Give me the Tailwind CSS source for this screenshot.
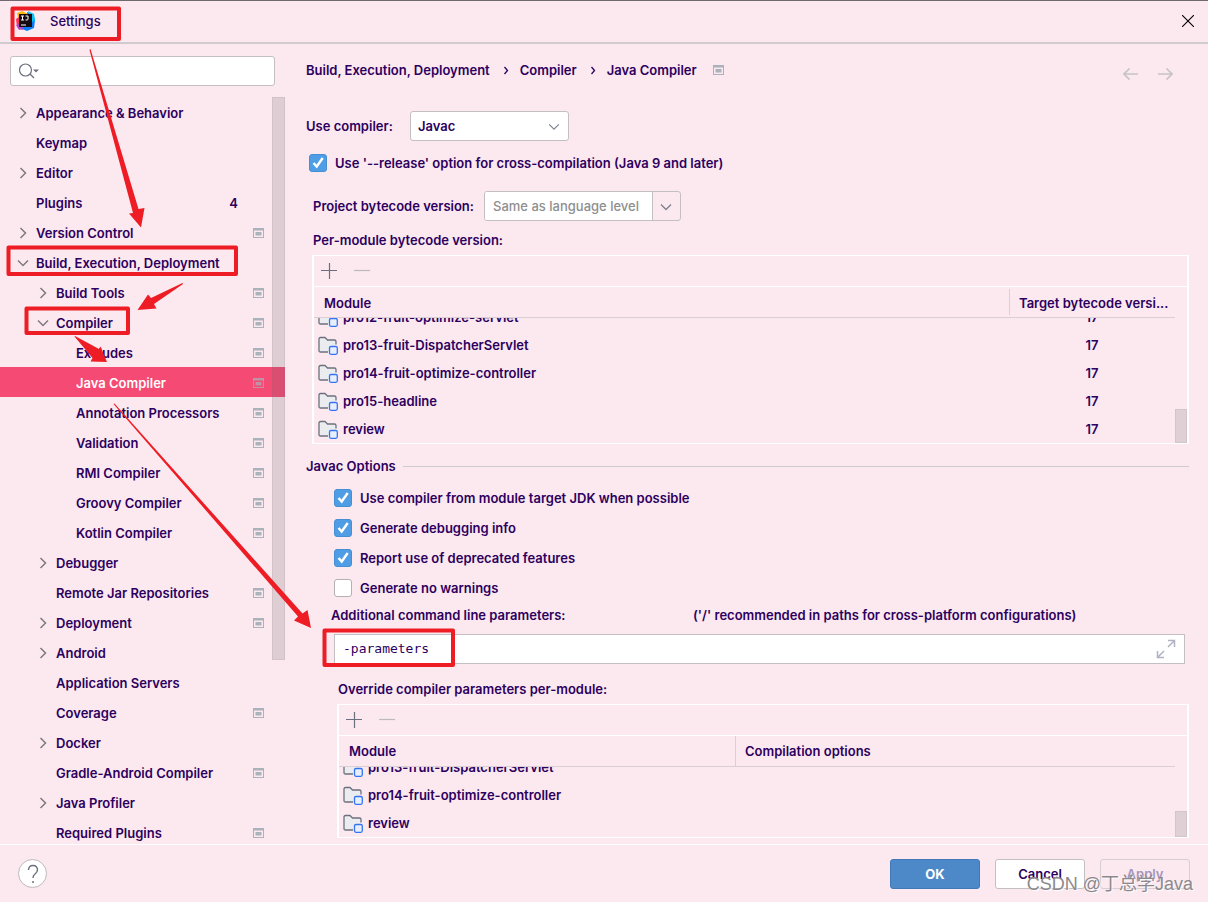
<!DOCTYPE html>
<html lang="en">

<head>
    <meta charset="UTF-8">
    <meta name="viewport" content="width=device-width, initial-scale=1.0">
    <title>Settings</title>
    <script src="https://cdn.jsdelivr.net/npm/@tailwindcss/browser@4"></script>
</head>

<body class="relative flex flex-col h-screen overflow-hidden bg-[#fbe9ef] text-[#2d0060] text-[13px] leading-5 font-semibold font-['Inter','Noto_Sans_CJK_SC',sans-serif]">

    <!-- shared icons -->
    <svg class="hidden">
        <symbol id="right" viewBox="0 0 16 16"><path d="M5.500 3l5 5-5 5" fill="none" stroke="#7f7a80" stroke-width="1.500"/></symbol>
        <symbol id="down" viewBox="0 0 16 16"><path d="M3 5.500l5 5 5-5" fill="none" stroke="#7f7a80" stroke-width="1.500"/></symbol>
        <symbol id="project" viewBox="0 0 11 10"><path d="M0 0h11v10H0zM1 2.500V9h9V2.500z" fill="#aab2bc" fill-rule="evenodd"/><path d="M2.500 4h6v3.500h-6z" fill="#aab2bc"/></symbol>
        <symbol id="module" viewBox="0 0 20 20">
            <path d="M10 17H2.500q-1.500 0-1.500-1.500V4q0-1.500 1.500-1.500h4.500l2.500 2.500h7q1.500 0 1.500 1.500v3" fill="#ebecf0"/>
            <path d="M10 17H2.500q-1.500 0-1.500-1.500V4q0-1.500 1.500-1.500h4.500l2.500 2.500h7q1.500 0 1.500 1.500v3" fill="none" stroke="#6c707e" stroke-width="1.300"/>
            <rect x="11.500" y="11.500" width="7.800" height="7.800" rx="1.500" fill="#e7effd" stroke="#3574f0" stroke-width="1.300"/>
        </symbol>
        <symbol id="check" viewBox="0 0 18 18"><path d="M4.500 9l3.200 3.500 6-8.500" fill="none" stroke="#fff" stroke-width="2.400"/></symbol>
        <symbol id="plus" viewBox="0 0 16 16"><path d="M0 7.500h16M8.500 0v16" stroke="#6c707e" stroke-width="1.200"/></symbol>
        <symbol id="minus" viewBox="0 0 16 16"><path d="M0 7.500h16" stroke="#bdb9be" stroke-width="1.200"/></symbol>
    </svg>

    <header class="flex items-center shrink-0 h-11 pl-4 pr-3 pb-0.5 border-t border-t-[#706a6e] border-b-2 border-b-[#cfcbce]">
        <svg class="size-5" viewBox="0 0 20 20">
            <path d="M1 2l5-2 6 3-6 8-5 1 1-4z" fill="#fdb60d"/>
            <path d="M0 8l6-4 4 12-4 3-5-3z" fill="#fe315d"/>
            <path d="M0 14l6-2 3 5-6 2z" fill="#b845c8"/>
            <path d="M11 1l6 2 2 6-1 8-7 3-5-2 6-8z" fill="#087cfa"/>
            <path d="M12 0l6 3 1 6-3 2z" fill="#07c3f2"/>
            <path d="M3 3h13v13H3z" fill="#140a10"/>
            <path d="M5 5h3M6.500 5v4M5 9h3M9.500 5h2.500v3q0 1-1 1H9.500M5 14h5" fill="none" stroke="#fff"/>
        </svg>
        <h1 class="pl-3.5 font-medium">Settings</h1>
        <button class="ml-auto p-0.5" aria-label="Close">
            <svg class="size-3" viewBox="0 0 12 12"><path d="M0 0l12 12M12 0L0 12" stroke="#000" stroke-width="1.100"/></svg>
        </button>
    </header>

    <div class="flex flex-1 min-h-0">

        <!-- settings tree -->
        <aside class="relative flex flex-col gap-[11px] w-[285px] shrink-0 pt-3 overflow-hidden">
            <div class="flex items-center h-[30px] shrink-0 ml-2.5 mr-2.5 pl-2 bg-white border border-[#c4bfc3] rounded-[3px]">
                <svg class="w-5 h-4 shrink-0" viewBox="0 0 20 16"><circle cx="6.500" cy="7" r="6" fill="none" stroke="#6c707e" stroke-width="1.200"/><path d="M11 11l4 4" stroke="#6c707e" stroke-width="1.200"/><path d="M14 6.500h6l-3 3z" fill="#6c707e"/></svg>
                <input type="text" aria-label="Search settings" class="flex-1 min-w-0 pl-1 outline-none">
            </div>
            <nav class="relative">
                <ul class="*:flex *:items-center *:h-[30px] *:pt-0.5 *:pr-[21px]">
                    <li class="pl-[15px]"><svg class="size-4 mr-[5px]"><use href="#right"/></svg><a href="#">Appearance &amp; Behavior</a></li>
                    <li class="pl-9"><a href="#">Keymap</a></li>
                    <li class="pl-[15px]"><svg class="size-4 mr-[5px]"><use href="#right"/></svg><a href="#">Editor</a></li>
                    <li class="pl-9"><a href="#">Plugins</a><span class="ml-auto mr-[26px]">4</span></li>
                    <li class="pl-[15px]"><svg class="size-4 mr-[5px]"><use href="#right"/></svg><a href="#">Version Control</a><svg class="ml-auto w-[11px] h-2.5"><use href="#project"/></svg></li>
                    <li class="pl-[15px]"><svg class="size-4 mr-[5px]"><use href="#down"/></svg><a href="#">Build, Execution, Deployment</a></li>
                    <li class="pl-[35px]"><svg class="size-4 mr-[5px]"><use href="#right"/></svg><a href="#">Build Tools</a><svg class="ml-auto w-[11px] h-2.5"><use href="#project"/></svg></li>
                    <li class="pl-[35px]"><svg class="size-4 mr-[5px]"><use href="#down"/></svg><a href="#">Compiler</a><svg class="ml-auto w-[11px] h-2.5"><use href="#project"/></svg></li>
                    <li class="pl-[76px]"><a href="#">Excludes</a><svg class="ml-auto w-[11px] h-2.5"><use href="#project"/></svg></li>
                    <li class="pl-[76px] bg-[#f44a73] text-white"><a href="#">Java Compiler</a><svg class="ml-auto w-[11px] h-2.5 opacity-70"><use href="#project"/></svg></li>
                    <li class="pl-[76px]"><a href="#">Annotation Processors</a><svg class="ml-auto w-[11px] h-2.5"><use href="#project"/></svg></li>
                    <li class="pl-[76px]"><a href="#">Validation</a><svg class="ml-auto w-[11px] h-2.5"><use href="#project"/></svg></li>
                    <li class="pl-[76px]"><a href="#">RMI Compiler</a><svg class="ml-auto w-[11px] h-2.5"><use href="#project"/></svg></li>
                    <li class="pl-[76px]"><a href="#">Groovy Compiler</a><svg class="ml-auto w-[11px] h-2.5"><use href="#project"/></svg></li>
                    <li class="pl-[76px]"><a href="#">Kotlin Compiler</a><svg class="ml-auto w-[11px] h-2.5"><use href="#project"/></svg></li>
                    <li class="pl-[35px]"><svg class="size-4 mr-[5px]"><use href="#right"/></svg><a href="#">Debugger</a></li>
                    <li class="pl-14"><a href="#">Remote Jar Repositories</a><svg class="ml-auto w-[11px] h-2.5"><use href="#project"/></svg></li>
                    <li class="pl-[35px]"><svg class="size-4 mr-[5px]"><use href="#right"/></svg><a href="#">Deployment</a><svg class="ml-auto w-[11px] h-2.5"><use href="#project"/></svg></li>
                    <li class="pl-[35px]"><svg class="size-4 mr-[5px]"><use href="#right"/></svg><a href="#">Android</a></li>
                    <li class="pl-14"><a href="#">Application Servers</a></li>
                    <li class="pl-14"><a href="#">Coverage</a><svg class="ml-auto w-[11px] h-2.5"><use href="#project"/></svg></li>
                    <li class="pl-[35px]"><svg class="size-4 mr-[5px]"><use href="#right"/></svg><a href="#">Docker</a></li>
                    <li class="pl-14"><a href="#">Gradle-Android Compiler</a><svg class="ml-auto w-[11px] h-2.5"><use href="#project"/></svg></li>
                    <li class="pl-[35px]"><svg class="size-4 mr-[5px]"><use href="#right"/></svg><a href="#">Java Profiler</a></li>
                    <li class="pl-14"><a href="#">Required Plugins</a><svg class="ml-auto w-[11px] h-2.5"><use href="#project"/></svg></li>
                </ul>
                <div class="absolute top-0 right-0 w-[13px] h-[563px] bg-[#735f69]/20 border border-[#735f69]/10"></div>
            </nav>
        </aside>

        <main class="flex-1 min-w-0 pt-4 pl-[21px] pr-[19px] overflow-hidden">
            <div class="flex items-center h-5">
                <span>Build, Execution, Deployment</span>
                <svg class="w-[30px] h-4" viewBox="0 0 30 16"><path d="M14.500 5l3 3.500-3 3.500" fill="none" stroke="#2d0060" stroke-width="1.300"/></svg>
                <span>Compiler</span>
                <svg class="w-[30px] h-4" viewBox="0 0 30 16"><path d="M14.500 5l3 3.500-3 3.500" fill="none" stroke="#2d0060" stroke-width="1.300"/></svg>
                <span>Java Compiler</span>
                <svg class="ml-4 w-[11px] h-2.5"><use href="#project"/></svg>
                <div class="flex gap-[18px] ml-auto mr-4 pt-2">
                    <button aria-label="Back"><svg class="w-4 h-3" viewBox="0 0 16 12"><path d="M15 6H1M6.500 .5L1 6l5.500 5.500" fill="none" stroke="#c6c2c6" stroke-width="1.600"/></svg></button>
                    <button aria-label="Forward"><svg class="w-4 h-3" viewBox="0 0 16 12"><path d="M1 6h14M9.500 .5L15 6l-5.500 5.500" fill="none" stroke="#c6c2c6" stroke-width="1.600"/></svg></button>
                </div>
            </div>

            <div class="flex items-center mt-[31px]">
                <label for="compiler" class="w-[104px]">Use compiler:</label>
                <div class="grid items-center">
                    <select id="compiler" class="col-start-1 row-start-1 appearance-none w-[159px] h-[30px] px-[7px] bg-white border border-[#c4bfc3] rounded-[3px]"><option>Javac</option></select>
                    <svg class="col-start-1 row-start-1 justify-self-end mr-[7px] size-4 pt-0.5 pointer-events-none" viewBox="0 0 16 16"><path d="M2.500 5L8 10.500 13.500 5" fill="none" stroke="#7c8090" stroke-width="1.300"/></svg>
                </div>
            </div>

            <label class="flex items-center gap-2 mt-3 pl-[3px]">
                <span class="grid"><input type="checkbox" checked class="col-start-1 row-start-1 appearance-none size-[18px] rounded-[3px] bg-white border border-[#b5b0b4] checked:bg-[#4f9de5] checked:border-[#478fd3]"><svg class="col-start-1 row-start-1 size-[18px] pointer-events-none"><use href="#check"/></svg></span>
                Use '--release' option for cross-compilation (Java 9 and later)
            </label>

            <div class="flex items-center mt-[18px] pl-[7px]">
                <label for="bytecode" class="w-[171px]">Project bytecode version:</label>
                <div class="flex w-[197px] h-[30px] border border-[#c4bfc3] rounded-[3px]">
                    <input id="bytecode" type="text" placeholder="Same as language level" class="flex-1 min-w-0 pl-2 bg-white rounded-l-[2px] font-medium placeholder:text-[#8f8f8f] outline-none">
                    <button aria-label="Show versions" class="w-7 pl-[5px] pt-0.5 border-l border-[#c4bfc3]"><svg class="size-4" viewBox="0 0 16 16"><path d="M3 5.500l5 5 5-5" fill="none" stroke="#7c8090" stroke-width="1.300"/></svg></button>
                </div>
            </div>

            <h2 class="mt-[9px] pl-[7px]">Per-module bytecode version:</h2>
            <section class="relative mt-[5px] ml-1.5 border-x-2 border-y border-white">
                <div class="flex items-center gap-[17px] h-[31px] pl-[7px] border-b border-white">
                    <button aria-label="Add module"><svg class="size-4"><use href="#plus"/></svg></button>
                    <button aria-label="Remove module"><svg class="size-4"><use href="#minus"/></svg></button>
                </div>
                <div class="pr-3">
                    <table class="w-full table-fixed border-separate border-spacing-0">
                        <thead>
                            <tr class="h-[31px] text-left *:border-b *:border-[#d9cfd4]">
                                <th class="pl-2.5 pt-0.5 pb-0 font-semibold">Module</th>
                                <th class="w-[166px] p-0 font-semibold"><div class="h-[26px] pl-[9px] leading-7 border-l border-[#d9cfd4] whitespace-nowrap">Target bytecode versi...</div></th>
                            </tr>
                        </thead>
                        <tbody class="leading-7">
                            <!-- scrolled half out of view -->
                            <tr>
                                <td class="p-0"><div class="flex items-end h-[13px] pl-1 overflow-hidden"><div class="flex items-center gap-[5px] h-7"><svg class="size-5"><use href="#module"/></svg>pro12-fruit-optimize-servlet</div></div></td>
                                <td class="p-0"><div class="flex items-end justify-center h-[13px] overflow-hidden"><div class="h-7">17</div></div></td>
                            </tr>
                            <tr>
                                <td class="p-0"><div class="flex items-center gap-[5px] h-7 pl-1"><svg class="size-5"><use href="#module"/></svg>pro13-fruit-DispatcherServlet</div></td>
                                <td class="p-0 text-center">17</td>
                            </tr>
                            <tr>
                                <td class="p-0"><div class="flex items-center gap-[5px] h-7 pl-1"><svg class="size-5"><use href="#module"/></svg>pro14-fruit-optimize-controller</div></td>
                                <td class="p-0 text-center">17</td>
                            </tr>
                            <tr>
                                <td class="p-0"><div class="flex items-center gap-[5px] h-7 pl-1"><svg class="size-5"><use href="#module"/></svg>pro15-headline</div></td>
                                <td class="p-0 text-center">17</td>
                            </tr>
                            <tr>
                                <td class="p-0"><div class="flex items-center gap-[5px] h-7 pl-1"><svg class="size-5"><use href="#module"/></svg>review</div></td>
                                <td class="p-0 text-center">17</td>
                            </tr>
                        </tbody>
                    </table>
                </div>
                <div class="absolute right-0 bottom-0 w-3 h-[34px] bg-[#dfd0d6] border border-[#d3c5cb]"></div>
            </section>

            <fieldset>
                <div class="flex items-center gap-[7px] mt-3"><h2>Javac Options</h2><span class="flex-1 h-px bg-[#cfcbce]"></span></div>

                <div class="flex flex-col items-start gap-2.5 mt-3 pl-7">
                    <label class="flex items-center gap-2">
                        <span class="grid"><input type="checkbox" checked class="col-start-1 row-start-1 appearance-none size-[18px] rounded-[3px] bg-white border border-[#b5b0b4] checked:bg-[#4f9de5] checked:border-[#478fd3]"><svg class="col-start-1 row-start-1 size-[18px] pointer-events-none"><use href="#check"/></svg></span>
                        Use compiler from module target JDK when possible
                    </label>
                    <label class="flex items-center gap-2">
                        <span class="grid"><input type="checkbox" checked class="col-start-1 row-start-1 appearance-none size-[18px] rounded-[3px] bg-white border border-[#b5b0b4] checked:bg-[#4f9de5] checked:border-[#478fd3]"><svg class="col-start-1 row-start-1 size-[18px] pointer-events-none"><use href="#check"/></svg></span>
                        Generate debugging info
                    </label>
                    <label class="flex items-center gap-2">
                        <span class="grid"><input type="checkbox" checked class="col-start-1 row-start-1 appearance-none size-[18px] rounded-[3px] bg-white border border-[#b5b0b4] checked:bg-[#4f9de5] checked:border-[#478fd3]"><svg class="col-start-1 row-start-1 size-[18px] pointer-events-none"><use href="#check"/></svg></span>
                        Report use of deprecated features
                    </label>
                    <label class="flex items-center gap-2">
                        <input type="checkbox" class="appearance-none size-[18px] rounded-[3px] bg-white border border-[#b5b0b4] checked:bg-[#4f9de5]">
                        Generate no warnings
                    </label>
                </div>

                <div class="flex mt-[7px] pl-[25px]">
                    <label for="params" class="w-[362px]">Additional command line parameters:</label>
                    <span>('/' recommended in paths for cross-platform configurations)</span>
                </div>
                <div class="flex items-center h-[30px] mt-[9px] ml-7 mr-1 pr-2 bg-white border border-[#c4bfc3]">
                    <input id="params" type="text" value="-parameters" class="flex-1 min-w-0 pl-2 outline-none font-normal font-['DejaVu_Sans_Mono',monospace]">
                    <button aria-label="Expand"><svg class="size-5" viewBox="0 0 20 20"><path d="M12 8l6-6M12 1.500h6.500V8M8 12l-6 6M1.500 12v6.500H8" fill="none" stroke="#afb3c2" stroke-width="1.500"/></svg></button>
                </div>

                <h2 class="mt-[15px] pl-8">Override compiler parameters per-module:</h2>
                <section class="relative mt-[5px] ml-[31px] border-x-2 border-y border-white">
                    <div class="flex items-center gap-[17px] h-[31px] pl-[7px] border-b border-white">
                        <button aria-label="Add override"><svg class="size-4"><use href="#plus"/></svg></button>
                        <button aria-label="Remove override"><svg class="size-4"><use href="#minus"/></svg></button>
                    </div>
                    <div class="pr-3">
                        <table class="w-full table-fixed border-separate border-spacing-0">
                            <thead>
                                <tr class="h-[31px] text-left *:border-b *:border-[#d9cfd4]">
                                    <th class="w-[396px] pl-2.5 py-0 font-semibold">Module</th>
                                    <th class="p-0 font-semibold"><div class="h-[30px] pl-[9px] leading-[30px] border-l border-[#d9cfd4]">Compilation options</div></th>
                                </tr>
                            </thead>
                            <tbody>
                                <tr>
                                    <td class="p-0"><div class="flex items-end h-3.5 pl-1 overflow-hidden"><div class="flex items-center gap-[5px] h-7"><svg class="size-5"><use href="#module"/></svg>pro13-fruit-DispatcherServlet</div></div></td>
                                    <td class="p-0"></td>
                                </tr>
                                <tr>
                                    <td class="p-0"><div class="flex items-center gap-[5px] h-7 pl-1"><svg class="size-5"><use href="#module"/></svg>pro14-fruit-optimize-controller</div></td>
                                    <td class="p-0"></td>
                                </tr>
                                <tr>
                                    <td class="p-0"><div class="flex items-center gap-[5px] h-7 pl-1"><svg class="size-5"><use href="#module"/></svg>review</div></td>
                                    <td class="p-0"></td>
                                </tr>
                            </tbody>
                        </table>
                    </div>
                    <div class="absolute right-0 bottom-0 w-3 h-[26px] bg-[#dfd0d6] border border-[#d3c5cb]"></div>
                </section>
            </fieldset>
        </main>
    </div>

    <footer class="flex items-center gap-[15px] shrink-0 h-[58px] pl-[18px] pr-[18px] border-t border-white">
        <button aria-label="Help" class="grid place-items-center size-[29px] mr-auto rounded-full bg-white border border-[#bdb9bc]"><svg class="w-3 h-5" viewBox="0 0 12 20"><path d="M1.500 6q0-4.500 4.500-4.500T10.500 6q0 2-2.500 4-2 1.500-2 4" fill="none" stroke="#6c707e" stroke-width="1.400"/><circle cx="6" cy="18" r="1" fill="#6c707e"/></svg></button>
        <button class="w-[90px] h-[30px] rounded-[3px] bg-[#4d89c8] border border-[#3f79b8] text-white font-bold">OK</button>
        <button class="w-[90px] h-[30px] rounded-[3px] bg-white border border-[#c4bfc3]">Cancel</button>
        <button disabled class="w-[90px] h-[30px] rounded-[3px] border border-[#d5cfd3] text-[#a596bb]">Apply</button>
    </footer>

    <div class="absolute right-[15px] bottom-1.5 text-lg leading-6 font-normal text-[#8d888c] text-shadow-[1px_1px_1px_#fff] font-['Liberation_Sans','Noto_Sans_CJK_SC',sans-serif]">CSDN @丁总学Java</div>

    <!-- step markers -->
    <svg class="absolute top-0 left-0 w-[480px] h-[680px] pointer-events-none" viewBox="0 0 480 680" fill="#ee1c25">
        <g fill="none" stroke="#ee1c25" stroke-width="4" stroke-linejoin="round">
            <rect x="12.500" y="8.500" width="106.500" height="30.500"/>
            <rect x="8.500" y="247.500" width="227.500" height="26.500"/>
            <rect x="26.500" y="308.500" width="101.500" height="24.500"/>
            <rect x="324.500" y="630.500" width="128.500" height="34.500"/>
        </g>
        <path d="M89.500 50l1-1 48 160 6-1-3.500 19.500-12-14 4-.500z"/>
        <path d="M182.500 283l.5 1-29 20 2.500 4.500-19 1.500 10.500-15.500 3 3.500z"/>
        <path d="M74.500 336.500l.5-.500 24 13 1.500-2.500 6.500 15.500-16.500-.500 2-3.500z"/>
        <path d="M113.500 404l1-.500 188 210 5-3.500 3.500 18-17-7.500 4-4z"/>
    </svg>

</body>

</html>
